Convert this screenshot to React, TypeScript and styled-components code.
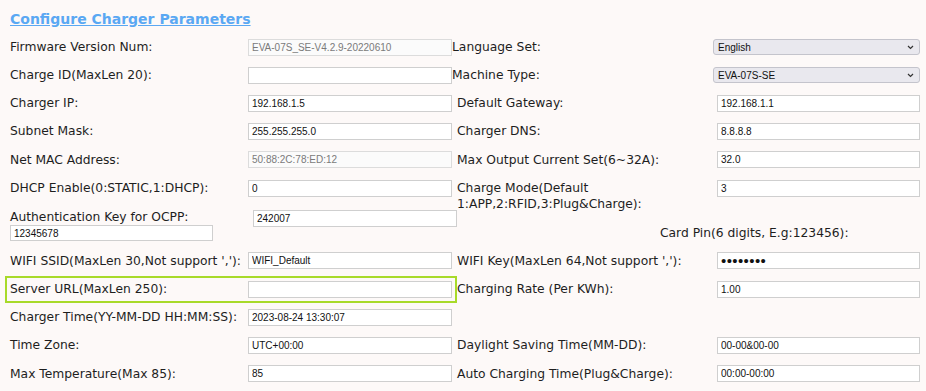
import React from 'react'
import styled, { createGlobalStyle, css } from 'styled-components'

const GlobalStyle = createGlobalStyle`
  html, body {
    margin: 0;
    background: #fdf9f8;
  }
  body {
    padding: 8px;
    font-family: 'DejaVu Sans', Verdana, sans-serif;
    color: #222;
  }
`

const labelFont = css`
  font-family: 'DejaVu Sans', Verdana, sans-serif;
  font-size: 12.3px;
  line-height: 16px;
  color: #1e1e1e;
`

const fieldFont = css`
  font-family: 'Liberation Sans', Arial, sans-serif;
  font-size: 10px;
  color: #111;
`

const S = {
  Page: styled.div`
    width: 912px;
    padding-left: 2px;
  `,
  Title: styled.h2`
    margin: 0;
    height: 25px;
    line-height: 22px;
    font-family: 'DejaVu Sans', Verdana, sans-serif;
    font-size: 14px;
    font-weight: bold;
    color: #5aa8f3;
    text-decoration: underline;
  `,
  Form: styled.div`
    display: flex;
    flex-direction: column;
  `,
  Row: styled.div<{ $h?: number; $top?: boolean }>`
    display: grid;
    grid-template-columns: 238px 204px 261px 207px;
    height: ${({ $h }) => $h ?? 28}px;
    align-items: ${({ $top }) => ($top ? 'start' : 'center')};
  `,
  Label: styled.div<{ $pad?: number; $wrap?: boolean; $top?: number }>`
    ${labelFont}
    padding-left: ${({ $pad }) => $pad ?? 0}px;
    padding-top: ${({ $top }) => $top ?? 0}px;
    white-space: ${({ $wrap }) => ($wrap ? 'normal' : 'nowrap')};
  `,
  Cell: styled.div<{ $top?: number; $pad?: number }>`
    display: flex;
    flex-direction: column;
    padding-top: ${({ $top }) => $top ?? 0}px;
    padding-left: ${({ $pad }) => $pad ?? 0}px;
  `,
  Highlight: styled.div`
    grid-column: 1 / 3;
    display: grid;
    grid-template-columns: 238px 204px;
    align-items: center;
    outline: 2px solid #a8da2a;
    outline-offset: 3px;
  `,
  Input: styled.input<{ $right?: boolean; $w?: number; $h?: number }>`
    ${fieldFont}
    box-sizing: border-box;
    width: ${({ $w }) => $w ?? 204}px;
    height: ${({ $h }) => $h ?? 17}px;
    margin: 0 0 0 ${({ $right }) => ($right ? 4 : 0)}px;
    padding: 0 3px;
    border: 1px solid #cfcfcf;
    border-radius: 0;
    background: #fff;
    outline: none;

    &:disabled {
      background: #fbfbfb;
      color: #7a7a7a;
      border-color: #dcdcdc;
    }

    &[type='password'] {
      font-size: 15px;
      letter-spacing: 0.4px;
    }
  `,
  Select: styled.div`
    ${fieldFont}
    box-sizing: border-box;
    display: flex;
    align-items: center;
    justify-content: space-between;
    width: 207px;
    height: 16px;
    padding: 0 5px 0 4px;
    border: 1px solid #c4c4cc;
    border-radius: 3px;
    background: #e9e8ee;
  `,
  PinLabel: styled.div`
    ${labelFont}
    grid-column: 3 / 5;
    margin-left: 208px;
    align-self: end;
    padding-bottom: 5px;
  `,
}

const Chevron = () => (
  <svg width="7" height="5" viewBox="0 0 7 5" fill="none">
    <path d="M1 1l2.5 2.5L6 1" stroke="#333" strokeWidth="1.2" />
  </svg>
)

const Dropdown = ({ value }: { value: string }) => (
  <S.Select>
    <span>{value}</span>
    <Chevron />
  </S.Select>
)

const Field = ({ value, disabled, right, type }: { value: string; disabled?: boolean; right?: boolean; type?: string }) => (
  <S.Input type={type ?? 'text'} value={value} readOnly disabled={disabled} $right={right} $w={right ? 203 : 204} />
)

export default function App() {
  return (
    <S.Page>
      <GlobalStyle />
      <S.Title>Configure Charger Parameters</S.Title>
      <S.Form>
        <S.Row>
          <S.Label>Firmware Version Num:</S.Label>
          <Field value="EVA-07S_SE-V4.2.9-20220610" disabled />
          <S.Label>Language Set:</S.Label>
          <Dropdown value="English" />
        </S.Row>
        <S.Row>
          <S.Label>Charge ID(MaxLen 20):</S.Label>
          <Field value="" />
          <S.Label>Machine Type:</S.Label>
          <Dropdown value="EVA-07S-SE" />
        </S.Row>
        <S.Row>
          <S.Label>Charger IP:</S.Label>
          <Field value="192.168.1.5" />
          <S.Label $pad={5}>Default Gateway:</S.Label>
          <Field value="192.168.1.1" right />
        </S.Row>
        <S.Row>
          <S.Label>Subnet Mask:</S.Label>
          <Field value="255.255.255.0" />
          <S.Label $pad={5}>Charger DNS:</S.Label>
          <Field value="8.8.8.8" right />
        </S.Row>
        <S.Row $h={29}>
          <S.Label>Net MAC Address:</S.Label>
          <Field value="50:88:2C:78:ED:12" disabled />
          <S.Label $pad={5}>Max Output Current Set(6~32A):</S.Label>
          <Field value="32.0" right />
        </S.Row>
        <S.Row $h={35} $top>
          <S.Label $top={6}>DHCP Enable(0:STATIC,1:DHCP):</S.Label>
          <S.Cell $top={6}>
            <Field value="0" />
          </S.Cell>
          <S.Label $pad={5} $wrap $top={6}>
            Charge Mode(Default 1:APP,2:RFID,3:Plug&amp;Charge):
          </S.Label>
          <S.Cell $top={6}>
            <Field value="3" right />
          </S.Cell>
        </S.Row>
        <S.Row $h={37} $top>
          <S.Cell>
            <S.Label>Authentication Key for OCPP:</S.Label>
            <S.Input type="text" value="12345678" readOnly $w={203} $h={16} />
          </S.Cell>
          <S.Cell $top={1} $pad={5}>
            <Field value="242007" />
          </S.Cell>
          <S.PinLabel>Card Pin(6 digits, E.g:123456):</S.PinLabel>
        </S.Row>
        <S.Row $h={29}>
          <S.Label>WIFI SSID(MaxLen 30,Not support ','):</S.Label>
          <Field value="WIFI_Default" />
          <S.Label $pad={5}>WIFI Key(MaxLen 64,Not support ','):</S.Label>
          <Field value="12345678" type="password" right />
        </S.Row>
        <S.Row>
          <S.Highlight>
            <S.Label>Server URL(MaxLen 250):</S.Label>
            <Field value="" />
          </S.Highlight>
          <S.Label $pad={5}>Charging Rate (Per KWh):</S.Label>
          <Field value="1.00" right />
        </S.Row>
        <S.Row>
          <S.Label>Charger Time(YY-MM-DD HH:MM:SS):</S.Label>
          <Field value="2023-08-24 13:30:07" />
        </S.Row>
        <S.Row>
          <S.Label>Time Zone:</S.Label>
          <Field value="UTC+00:00" />
          <S.Label $pad={5}>Daylight Saving Time(MM-DD):</S.Label>
          <Field value="00-00&00-00" right />
        </S.Row>
        <S.Row $h={29}>
          <S.Label>Max Temperature(Max 85):</S.Label>
          <Field value="85" />
          <S.Label $pad={5}>Auto Charging Time(Plug&amp;Charge):</S.Label>
          <Field value="00:00-00:00" right />
        </S.Row>
      </S.Form>
    </S.Page>
  )
}
